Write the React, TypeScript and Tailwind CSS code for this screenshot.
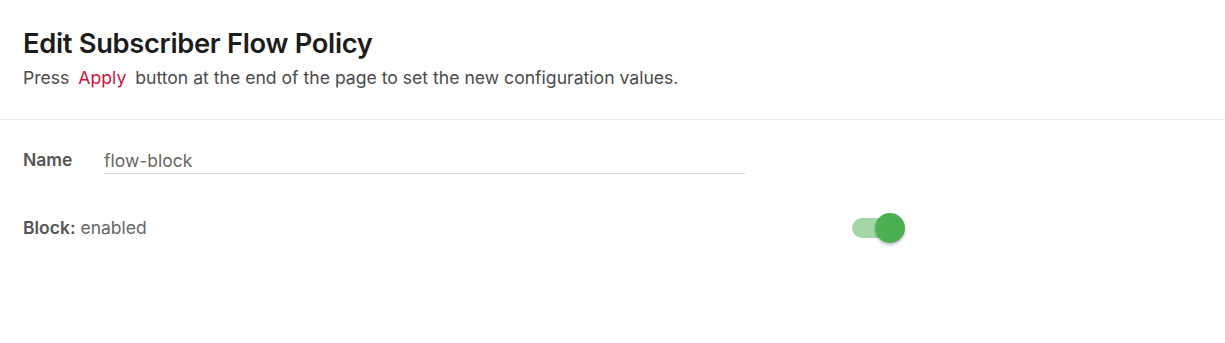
export default function App() {
  return (
    <div className="w-[1225px] h-[343px] bg-white" style={{ fontFamily: '"Inter", "Liberation Sans", sans-serif' }}>
      <div className="px-[23px] pt-[28px] pb-[29px] border-b border-[#ebebeb]">
        <h1 className="text-[27.3px] leading-[32px] font-semibold text-[#1c1c1c] tracking-[-0.3px]">Edit Subscriber Flow Policy</h1>
        <p className="mt-[6px] text-[17.6px] leading-[24px] text-[#4a4a4a]">
          Press <span className="text-[#c8143c] mx-[4px]">Apply</span> button at the end of the page to set the new configuration values.
        </p>
      </div>
      <div className="px-[23px] pt-[28px]">
        <div className="flex items-end h-[26px]">
          <span className="w-[81px] text-[17.5px] font-semibold text-[#555555] pb-[1px]">Name</span>
          <div className="w-[641px] border-b border-[#d9d9d9] text-[17.5px] leading-[24px] text-[#666666]">flow-block</div>
        </div>
        <div className="flex items-center mt-[34px] h-[40px]">
          <div className="w-[829px] text-[17.5px] text-[#666666]">
            <span className="font-semibold text-[#555555]">Block:</span> enabled
          </div>
          <div className="relative w-[51px] h-[30px] flex items-center">
            <div className="w-[51px] h-[20px] rounded-full bg-[#a5d6a7]" />
            <div className="absolute right-[-2px] top-0 w-[30px] h-[30px] rounded-full bg-[#4caf50] shadow-[0_2px_3px_rgba(0,0,0,0.25)]" />
          </div>
        </div>
      </div>
    </div>
  );
}
